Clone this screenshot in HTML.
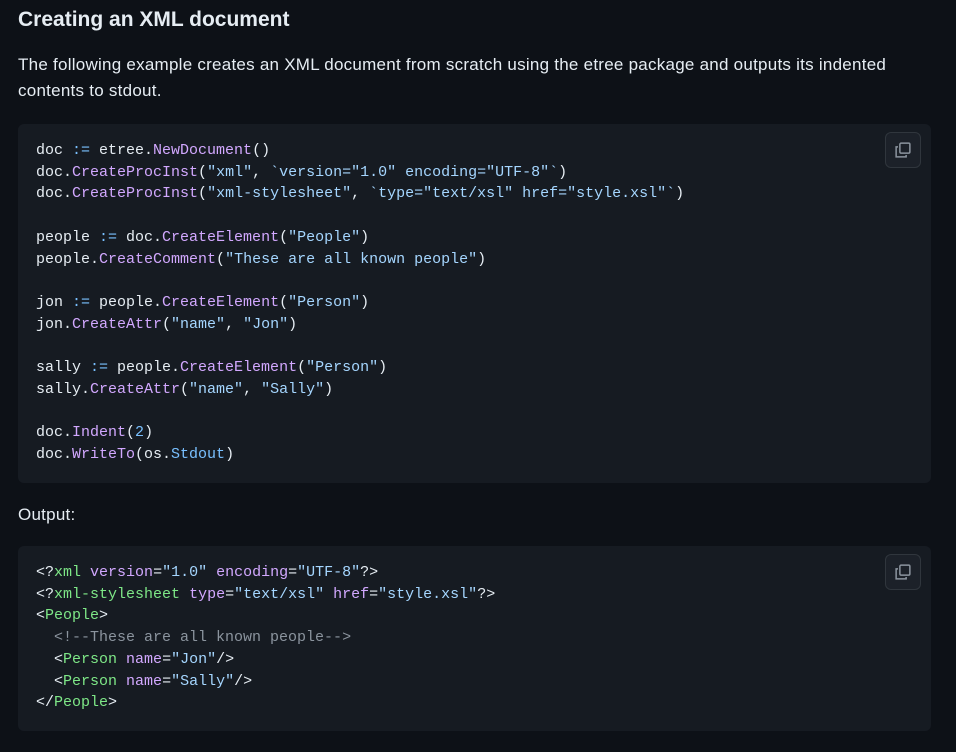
<!DOCTYPE html>
<html><head><style>
html,body{margin:0;padding:0;background:#0d1117;width:956px;height:752px;overflow:hidden}
body{font-family:"Liberation Sans",sans-serif;color:#e6edf3;position:relative}
h2{position:absolute;left:18px;top:6px;margin:0;font-size:21px;font-weight:bold;line-height:28px}
p{position:absolute;left:18px;margin:0;font-size:17px;letter-spacing:0.25px;line-height:26px;width:905px}
.blk{position:absolute;left:18px;width:913px;background:#161b22;border-radius:6px}
pre{margin:0;position:absolute;left:18px;top:16px;font-family:"Liberation Mono",monospace;font-size:15px;line-height:21.7px;color:#e6edf3}
.b{color:#79c0ff}.s{color:#a5d6ff}.f{color:#d2a8ff}.g{color:#7ee787}.c{color:#8b949e}
.btn{position:absolute;right:10px;top:8px;width:34px;height:34px;border:1px solid #30363d;border-radius:6px;background:#1c2129}
.btn svg{position:absolute;left:7px;top:7px}
</style></head><body>
<h2>Creating an XML document</h2>
<p style="top:52px">The following example creates an XML document from scratch using the etree package and outputs its indented contents to stdout.</p>
<div class="blk" style="top:124px;height:359px">
<pre>doc <span class="b">:=</span> etree.<span class="f">NewDocument</span>()
doc.<span class="f">CreateProcInst</span>(<span class="s">"xml"</span>, <span class="s">`version="1.0" encoding="UTF-8"`</span>)
doc.<span class="f">CreateProcInst</span>(<span class="s">"xml-stylesheet"</span>, <span class="s">`type="text/xsl" href="style.xsl"`</span>)

people <span class="b">:=</span> doc.<span class="f">CreateElement</span>(<span class="s">"People"</span>)
people.<span class="f">CreateComment</span>(<span class="s">"These are all known people"</span>)

jon <span class="b">:=</span> people.<span class="f">CreateElement</span>(<span class="s">"Person"</span>)
jon.<span class="f">CreateAttr</span>(<span class="s">"name"</span>, <span class="s">"Jon"</span>)

sally <span class="b">:=</span> people.<span class="f">CreateElement</span>(<span class="s">"Person"</span>)
sally.<span class="f">CreateAttr</span>(<span class="s">"name"</span>, <span class="s">"Sally"</span>)

doc.<span class="f">Indent</span>(<span class="b">2</span>)
doc.<span class="f">WriteTo</span>(os.<span class="b">Stdout</span>)</pre>
<div class="btn"><svg width="20" height="20" viewBox="0 0 16 16" fill="none" stroke="#8b949e" stroke-width="1.2"><path d="M4 5.5H2.5v8h8V12"/><rect x="5.5" y="2.5" width="8" height="8" rx="1"/></svg></div>
</div>
<p style="top:502px">Output:</p>
<div class="blk" style="top:546px;height:185px">
<pre>&lt;?<span class="g">xml</span> <span class="f">version</span>=<span class="s">"1.0"</span> <span class="f">encoding</span>=<span class="s">"UTF-8"</span>?&gt;
&lt;?<span class="g">xml-stylesheet</span> <span class="f">type</span>=<span class="s">"text/xsl"</span> <span class="f">href</span>=<span class="s">"style.xsl"</span>?&gt;
&lt;<span class="g">People</span>&gt;
  <span class="c">&lt;!--These are all known people--&gt;</span>
  &lt;<span class="g">Person</span> <span class="f">name</span>=<span class="s">"Jon"</span>/&gt;
  &lt;<span class="g">Person</span> <span class="f">name</span>=<span class="s">"Sally"</span>/&gt;
&lt;/<span class="g">People</span>&gt;</pre>
<div class="btn"><svg width="20" height="20" viewBox="0 0 16 16" fill="none" stroke="#8b949e" stroke-width="1.2"><path d="M4 5.5H2.5v8h8V12"/><rect x="5.5" y="2.5" width="8" height="8" rx="1"/></svg></div>
</div>
</body></html>
